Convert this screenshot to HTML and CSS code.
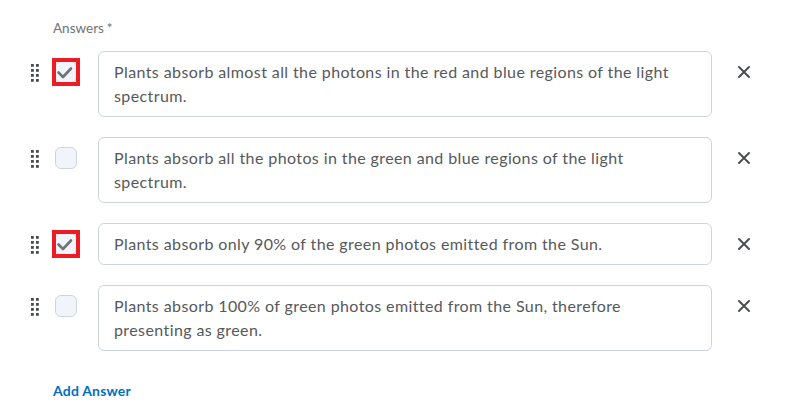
FILE: index.html
```html
<!DOCTYPE html>
<html>
<head>
<meta charset="utf-8">
<link rel="stylesheet" href="styles.css">
</head>
<body>
<div class="editor">
  <div class="label">Answers<span class="req">*</span></div>
  <div class="rows">
    <div class="row">
      <svg class="handle" width="8" height="18" viewBox="0 0 8 18"><g fill="#494c4e"><rect x="0" y="0" width="2.8" height="2.8"/><rect x="5" y="0" width="2.8" height="2.8"/><rect x="0" y="5" width="2.8" height="2.8"/><rect x="5" y="5" width="2.8" height="2.8"/><rect x="0" y="10" width="2.8" height="2.8"/><rect x="5" y="10" width="2.8" height="2.8"/><rect x="0" y="15" width="2.8" height="2.8"/><rect x="5" y="15" width="2.8" height="2.8"/></g></svg>
      <div class="check checked"><svg width="20" height="20" viewBox="0 0 20 20"><path d="M2.5 10.5 L7 15 L15 6.5" fill="none" stroke="#6e7376" stroke-width="2.6" stroke-linecap="round" stroke-linejoin="round"/></svg></div>
      <div class="answer">Plants absorb almost all the photons in the red and blue regions of the light spectrum.</div>
      <div class="remove"><svg width="12" height="12" viewBox="0 0 12 12"><path d="M1 1 L11 11 M11 1 L1 11" stroke="#494c4e" stroke-width="1.9" stroke-linecap="round"/></svg></div>
    </div>
    <div class="row">
      <svg class="handle" width="8" height="18" viewBox="0 0 8 18"><g fill="#494c4e"><rect x="0" y="0" width="2.8" height="2.8"/><rect x="5" y="0" width="2.8" height="2.8"/><rect x="0" y="5" width="2.8" height="2.8"/><rect x="5" y="5" width="2.8" height="2.8"/><rect x="0" y="10" width="2.8" height="2.8"/><rect x="5" y="10" width="2.8" height="2.8"/><rect x="0" y="15" width="2.8" height="2.8"/><rect x="5" y="15" width="2.8" height="2.8"/></g></svg>
      <div class="check"></div>
      <div class="answer">Plants absorb all the photos in the green and blue regions of the light spectrum.</div>
      <div class="remove"><svg width="12" height="12" viewBox="0 0 12 12"><path d="M1 1 L11 11 M11 1 L1 11" stroke="#494c4e" stroke-width="1.9" stroke-linecap="round"/></svg></div>
    </div>
    <div class="row">
      <svg class="handle" width="8" height="18" viewBox="0 0 8 18"><g fill="#494c4e"><rect x="0" y="0" width="2.8" height="2.8"/><rect x="5" y="0" width="2.8" height="2.8"/><rect x="0" y="5" width="2.8" height="2.8"/><rect x="5" y="5" width="2.8" height="2.8"/><rect x="0" y="10" width="2.8" height="2.8"/><rect x="5" y="10" width="2.8" height="2.8"/><rect x="0" y="15" width="2.8" height="2.8"/><rect x="5" y="15" width="2.8" height="2.8"/></g></svg>
      <div class="check checked"><svg width="20" height="20" viewBox="0 0 20 20"><path d="M2.5 10.5 L7 15 L15 6.5" fill="none" stroke="#6e7376" stroke-width="2.6" stroke-linecap="round" stroke-linejoin="round"/></svg></div>
      <div class="answer">Plants absorb only 90% of the green photos emitted from the Sun.</div>
      <div class="remove"><svg width="12" height="12" viewBox="0 0 12 12"><path d="M1 1 L11 11 M11 1 L1 11" stroke="#494c4e" stroke-width="1.9" stroke-linecap="round"/></svg></div>
    </div>
    <div class="row">
      <svg class="handle" width="8" height="18" viewBox="0 0 8 18"><g fill="#494c4e"><rect x="0" y="0" width="2.8" height="2.8"/><rect x="5" y="0" width="2.8" height="2.8"/><rect x="0" y="5" width="2.8" height="2.8"/><rect x="5" y="5" width="2.8" height="2.8"/><rect x="0" y="10" width="2.8" height="2.8"/><rect x="5" y="10" width="2.8" height="2.8"/><rect x="0" y="15" width="2.8" height="2.8"/><rect x="5" y="15" width="2.8" height="2.8"/></g></svg>
      <div class="check"></div>
      <div class="answer">Plants absorb 100% of green photos emitted from the Sun, therefore presenting as green.</div>
      <div class="remove"><svg width="12" height="12" viewBox="0 0 12 12"><path d="M1 1 L11 11 M11 1 L1 11" stroke="#494c4e" stroke-width="1.9" stroke-linecap="round"/></svg></div>
    </div>
  </div>
  <a class="add" href="#">Add Answer</a>
</div>
</body>
</html>
```

FILE: styles.css
```css
* { box-sizing: border-box; }
html, body { margin: 0; padding: 0; background: #ffffff; }
body { font-family: Lato, "Noto Sans", sans-serif; color: #494c4e; }
.editor { padding: 18px 0 0 31px; }
.label {
  margin-left: 22px;
  font-size: 13.5px;
  line-height: 20px;
  color: #6e7376;
}
.req { margin-left: 3px; }
.rows { margin-top: 13px; display: flex; flex-direction: column; gap: 20px; }
.row { display: flex; align-items: flex-start; }
.handle { display: block; margin-top: 12.5px; flex: none; }
.check {
  position: relative;
  flex: none;
  width: 22px;
  height: 22px;
  margin: 10px 0 0 16px;
  border: 1px solid #cdd5dc;
  border-radius: 6px;
  background: #f1f5fb;
}
.check svg { display: block; }
.check.checked::after {
  content: "";
  position: absolute;
  left: -4px;
  top: -4px;
  right: -4px;
  bottom: -4px;
  border: 4px solid #ec1c24;
}
.answer {
  flex: none;
  width: 614px;
  margin-left: 21px;
  padding: 8px 15px;
  border: 1px solid #cdd5dc;
  border-radius: 6px;
  font-size: 16px;
  line-height: 24px;
  letter-spacing: 0.4px;
  color: #56595c;
  background: #fff;
}
.remove {
  flex: none;
  width: 32px;
  height: 42px;
  margin-left: 16px;
  display: flex;
  align-items: center;
  justify-content: center;
}
.add {
  display: inline-block;
  margin: 30px 0 0 22px;
  font-size: 14px;
  line-height: 20px;
  font-weight: 700;
  letter-spacing: 0.2px;
  color: #006fbf;
  text-decoration: none;
}
```
